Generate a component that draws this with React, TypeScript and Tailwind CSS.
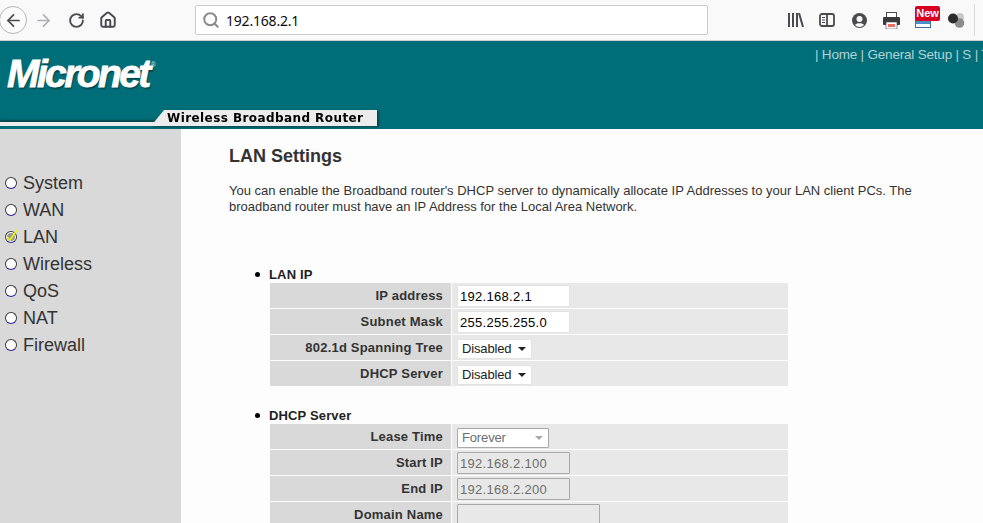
import { ArrowLeft, ArrowRight, RotateCw, House, Search } from "lucide-react";

const NAV = ["System", "WAN", "LAN", "Wireless", "QoS", "NAT", "Firewall"];

function Toolbar() {
  return (
    <div className="h-[41px] shrink-0 flex items-center bg-[#f9f9fa] border-b border-[#cfcfcf] relative">
      <div className="size-[28px] -ml-[1px] rounded-full border border-[#b5b5b5] bg-[#fcfcfc] flex items-center justify-center">
        <ArrowLeft className="size-[19px] text-[#4a4a4f]" strokeWidth={2.2} />
      </div>
      <ArrowRight className="size-[19px] ml-[7px] text-[#b1b1b3]" strokeWidth={2.2} />
      <RotateCw className="size-[17px] ml-[15px] text-[#4a4a4f]" strokeWidth={2.6} />
      <House className="size-[18px] ml-[14px] text-[#4a4a4f]" strokeWidth={2.6} />
      <div className="ml-[78px] w-[513px] h-[30px] rounded-[2px] border border-[#cccccc] bg-white flex items-center pl-[6px]">
        <Search className="size-[18px] text-[#8a8a8a]" strokeWidth={2.6} />
        <span className="ml-[6px] text-[14px] tracking-[-0.2px] text-[#0c0c0d] font-['Noto_Sans',sans-serif]">192.168.2.1</span>
      </div>
      <div className="ml-[80px] flex items-center">
        <svg width="16" height="14" viewBox="0 0 16 14" fill="none" stroke="#4a4a4f" strokeWidth="2">
          <path d="M1 0v14M5 0v14M9 0v14M11 0l4 14" />
        </svg>
        <svg className="ml-[15px]" width="16" height="14" viewBox="0 0 16 14" fill="none" stroke="#4a4a4f" strokeWidth="1.8">
          <rect x="1" y="1" width="14" height="12" rx="2" />
          <path d="M8 1v12" />
          <path d="M3 4.5h3M3 7h3M3 9.5h3" strokeWidth="1.2" />
        </svg>
        <svg className="ml-[17px]" width="15" height="15" viewBox="0 0 15 15">
          <circle cx="7.5" cy="7.5" r="7.5" fill="#4a4a4f" />
          <circle cx="7.5" cy="6" r="3" fill="#f9f9fa" />
          <path d="M3 12c1-2.5 8-2.5 9 0a6 6 0 0 1-9 0z" fill="#f9f9fa" />
        </svg>
        <svg className="ml-[16px]" width="17" height="17" viewBox="0 0 17 17">
          <rect x="3.5" y="0.5" width="10" height="5" fill="#fff" stroke="#4a4a4f" />
          <rect x="0" y="5" width="17" height="8" rx="1" fill="#3a3a3d" />
          <rect x="3" y="10" width="11" height="7" fill="#fff" stroke="#4a4a4f" strokeWidth="0.6" />
          <rect x="5" y="12" width="7" height="3" fill="#f06a6a" />
        </svg>
        <div className="relative ml-[15px] w-[16px] h-[8px] mt-[8px] border border-[#3a6ea5] bg-white">
          <div className="absolute left-0 right-0 top-0 h-[3px] bg-[#4a90c8]" />
          <span className="absolute -top-[15px] -left-[1px] h-[15px] w-[25px] rounded-[2px] bg-[#d70022] text-white text-[11px] leading-[14px] font-bold text-center font-['Liberation_Sans',sans-serif]">New</span>
        </div>
        <svg className="ml-[16px]" width="18" height="16" viewBox="0 0 18 16">
          <circle cx="13" cy="5" r="4" fill="#c8c8c8" />
          <circle cx="12.5" cy="11" r="4.8" fill="#8c8c8c" />
          <circle cx="6" cy="6.5" r="5" fill="#2c2c2c" />
        </svg>
      </div>
      <div className="absolute left-[974px] top-[4px] h-[32px] w-px bg-[#d8d8d8]" />
    </div>
  );
}

function Header() {
  return (
    <div className="h-[88px] shrink-0 bg-[#006e78] relative overflow-hidden font-['Liberation_Sans',sans-serif]">
      <div className="flex items-start">
        <span className="ml-[7px] mt-[10px] text-[39px] leading-[46px] font-bold italic tracking-[-2.6px] text-white [-webkit-text-stroke:0.8px_white] [text-shadow:1px_2px_1px_#00454c]">
          Micronet
        </span>
        <span className="mt-[20px] ml-[2px] text-[7px] leading-[8px] text-[#cfe4e6]">®</span>
        <div className="absolute left-[815px] top-[5px] w-[168px] whitespace-nowrap text-[13.5px] leading-[17px] tracking-[-0.2px] text-[#b4d2d5]">
          | Home | General Setup | S | T
        </div>
      </div>
      <div className="absolute left-0 top-[81px] w-[155px] h-[4px] bg-[#ececec] shadow-[0_-2px_2px_#00454c]" />
      <div className="absolute left-[151px] top-[69px] [filter:drop-shadow(2px_1px_1px_#00454c)]">
        <div className="w-[226px] h-[16px] bg-[#ececec] [clip-path:polygon(13px_0,100%_0,100%_100%,0_100%)] pl-[16px] font-['DejaVu_Sans',sans-serif] font-bold text-[12px] leading-[16px] tracking-[0.42px] text-black whitespace-nowrap">
          Wireless Broadband Router
        </div>
      </div>
    </div>
  );
}

function Sidebar() {
  return (
    <div className="w-[181px] shrink-0 bg-[#d9d9d9] pt-[41px] font-['Liberation_Sans',sans-serif]">
      {NAV.map((n) => (
        <div key={n} className="h-[27px] flex items-center pl-[5px]">
          <span className="relative size-[12px] -mt-[2px]">
            <span className="absolute inset-0 rounded-full border-[1.5px] border-[#3a3a3a] border-b-[#26269a] bg-white" />
            {n === "LAN" && (
              <svg className="absolute -top-[2px] left-0" width="14" height="14" viewBox="0 0 14 14" fill="none">
                <circle cx="6" cy="8" r="4" fill="#9a9a9a" />
                <path d="M2 8l3 3 7-10" stroke="#f5f500" strokeWidth="1.5" />
              </svg>
            )}
          </span>
          <span className="ml-[6px] text-[18px] text-[#333333]">{n}</span>
        </div>
      ))}
    </div>
  );
}

function Row({ label, children }: { label: string; children: React.ReactNode }) {
  return (
    <div className="flex h-[25px] mb-px">
      <div className="w-[181px] bg-[#d9d9d9] pr-[8px] text-right text-[13px] leading-[25px] font-bold text-[#333333] tracking-[0.2px]">
        {label}
      </div>
      <div className="ml-px flex-1 bg-[#e8e8e8] pl-[5px] flex items-center">{children}</div>
    </div>
  );
}

function TextBox({ value, disabled, w = "w-[113px]" }: { value: string; disabled?: boolean; w?: string }) {
  return (
    <div
      className={
        w +
        " h-[22px] rounded-[1px] border pl-[2px] text-[13px] leading-[21px] tracking-[0.3px] " +
        (disabled ? "border-[#a9a9a9] bg-[#e8e8e8] text-[#6d6d6d]" : "border-[#e3e3e3] bg-white text-black")
      }
    >
      {value}
    </div>
  );
}

function SelectBox({ value, disabled }: { value: string; disabled?: boolean }) {
  return (
    <div
      className={
        "mt-[3px] h-[20px] rounded-[1px] border flex items-center pl-[4px] text-[13px] tracking-[-0.15px] " +
        (disabled
          ? "w-[92px] border-[#a9a9a9] bg-white text-[#6d6d6d]"
          : "w-[75px] border-[#e3e3e3] bg-white text-[#222222]")
      }
    >
      <span>{value}</span>
      <span
        className={
          "ml-auto mr-[5px] w-0 h-0 border-x-[4px] border-x-transparent border-t-[4px] " +
          (disabled ? "border-t-[#a9a9a9]" : "border-t-[#222222]")
        }
      />
    </div>
  );
}

function Heading({ children }: { children: string }) {
  return (
    <div className="flex items-center h-[17px] pl-[74px] text-[13px] font-bold text-[#222222] tracking-[0.15px]">
      <span className="size-[5px] rounded-full bg-black mr-[9px]" />
      {children}
    </div>
  );
}

export default function App() {
  return (
    <div className="w-[983px] h-[523px] overflow-hidden flex flex-col bg-white">
      <Toolbar />
      <Header />
      <div className="flex flex-1 min-h-0">
        <Sidebar />
        <div className="flex-1 bg-[#fdfdfd] font-['Liberation_Sans',sans-serif]">
          <h1 className="ml-[48px] mt-[16px] text-[18px] leading-[22px] font-bold text-[#333333]">LAN Settings</h1>
          <p className="ml-[48px] mt-[16px] w-[700px] text-[13px] leading-[16px] text-[#333333]">
            You can enable the Broadband router's DHCP server to dynamically allocate IP Addresses to your LAN client PCs. The broadband router must have an IP Address for the Local Area Network.
          </p>
          <div className="mt-[51px]">
            <Heading>LAN IP</Heading>
            <div className="ml-[89px] w-[518px]">
              <Row label="IP address"><TextBox value="192.168.2.1" /></Row>
              <Row label="Subnet Mask"><TextBox value="255.255.255.0" /></Row>
              <Row label="802.1d Spanning Tree"><SelectBox value="Disabled" /></Row>
              <Row label="DHCP Server"><SelectBox value="Disabled" /></Row>
            </div>
            <div className="mt-[21px]">
              <Heading>DHCP Server</Heading>
            </div>
            <div className="ml-[89px] w-[518px]">
              <Row label="Lease Time"><SelectBox value="Forever" disabled /></Row>
              <Row label="Start IP"><TextBox value="192.168.2.100" disabled /></Row>
              <Row label="End IP"><TextBox value="192.168.2.200" disabled /></Row>
              <Row label="Domain Name"><TextBox value="" disabled w="w-[143px]" /></Row>
            </div>
          </div>
        </div>
      </div>
    </div>
  );
}
